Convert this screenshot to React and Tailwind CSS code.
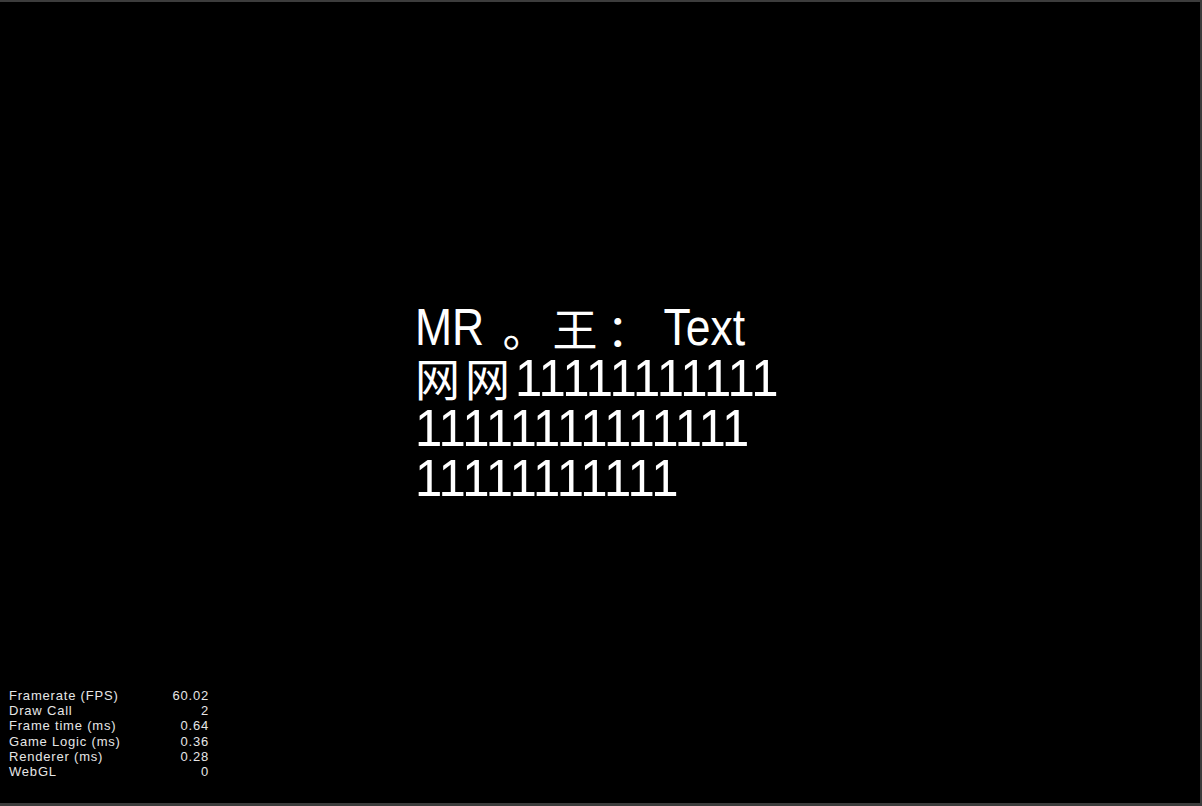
import React from 'react';

const digits = "inline-block scale-y-[1.05] font-['Liberation_Sans',Arial,sans-serif] text-[49px] leading-[50px]";
const letters = "inline-block scale-y-[1.156] font-['Liberation_Sans',Arial,sans-serif] text-[44.5px] leading-[50px]";
const cjk = "inline-block w-[50px] font-['Noto_Sans_CJK_SC',sans-serif] text-[45px] leading-[50px]";

const stats = [
  ['Framerate (FPS)', '60.02'],
  ['Draw Call', '2'],
  ['Frame time (ms)', '0.64'],
  ['Game Logic (ms)', '0.36'],
  ['Renderer (ms)', '0.28'],
  ['WebGL', '0'],
];

export default function App() {
  return (
    <div className="relative h-[806px] w-full overflow-hidden bg-black border-t-2 border-r-2 border-b-[3px] border-[#3c3c3c]">
      <div className="flex h-full items-center justify-center">
        <div className="w-[370px] text-white whitespace-nowrap">
          <div className="flex h-[50px] items-center">
            <span className={letters}>MR&nbsp;</span>
            <span className={cjk + ' ml-[6px]'}>。</span>
            <span className={cjk}>王</span>
            <span className={cjk + ' ml-[4px] mr-[7px]'}>：</span>
            <span className={letters}>Text</span>
          </div>
          <div className="flex h-[50px] items-center">
            <span className={cjk}>网</span>
            <span className={cjk}>网</span>
            <span className={digits}>11111111111</span>
          </div>
          <div className="flex h-[50px] items-center">
            <span className={digits}>11111111111111</span>
          </div>
          <div className="flex h-[50px] items-center">
            <span className={digits}>11111111111</span>
          </div>
        </div>
      </div>

      {/* profiler overlay */}
      <div className="absolute left-[9px] top-[686px] w-[200px] font-['Liberation_Sans',Arial,sans-serif] text-[13px] leading-[15.2px] tracking-[0.8px] text-[#e6e6e6]">
        {stats.map(([k, v]) => (
          <div key={k} className="flex justify-between">
            <span>{k}</span>
            <span>{v}</span>
          </div>
        ))}
      </div>
    </div>
  );
}
